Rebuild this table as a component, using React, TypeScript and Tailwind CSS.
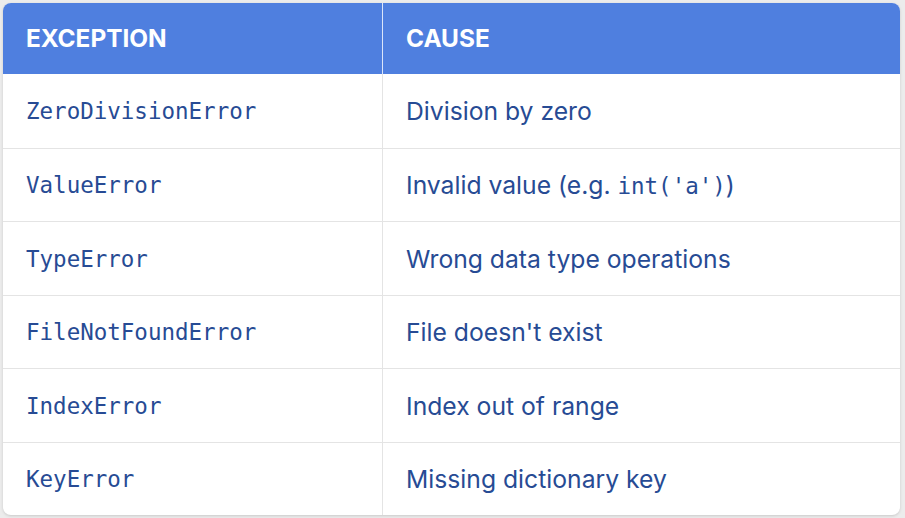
const rows: { name: string; cause: React.ReactNode }[] = [
  { name: 'ZeroDivisionError', cause: 'Division by zero' },
  {
    name: 'ValueError',
    cause: (
      <>
        Invalid value (e.g.{' '}
        <code className="font-['DejaVu_Sans_Mono',monospace] text-[22.5px]">int('a')</code>)
      </>
    ),
  },
  { name: 'TypeError', cause: 'Wrong data type operations' },
  { name: 'FileNotFoundError', cause: "File doesn't exist" },
  { name: 'IndexError', cause: 'Index out of range' },
  { name: 'KeyError', cause: 'Missing dictionary key' },
];

export default function App() {
  return (
    <div className="w-[905px] h-[518px] bg-[#ececec] pt-[3px] pl-[3px] font-['Inter',sans-serif]">
      <div className="w-[897px] rounded-lg overflow-hidden bg-white shadow-[0_1px_3px_rgba(0,0,0,0.15)]">
        <div className="grid grid-cols-[380px_1fr] h-[71px] bg-[#4f7fdf] text-white font-bold text-[24.4px]">
          <div className="flex items-center pl-[23px] border-r border-[#dbe5fa]">EXCEPTION</div>
          <div className="flex items-center pl-[23px]">CAUSE</div>
        </div>
        {rows.map((r, i) => (
          <div
            key={r.name}
            className={`grid grid-cols-[380px_1fr] h-[73.5px] text-[#274b94] ${i > 0 ? 'border-t border-[#e4e4e4]' : ''}`}
          >
            <div className="flex items-center pl-[23px] pt-[3px] border-r border-[#e4e4e4] font-['DejaVu_Sans_Mono',monospace] text-[22.5px]">
              {r.name}
            </div>
            <div className="flex items-center pl-[23px] pt-[2px] text-[24.7px]">
              <span>{r.cause}</span>
            </div>
          </div>
        ))}
      </div>
    </div>
  );
}
